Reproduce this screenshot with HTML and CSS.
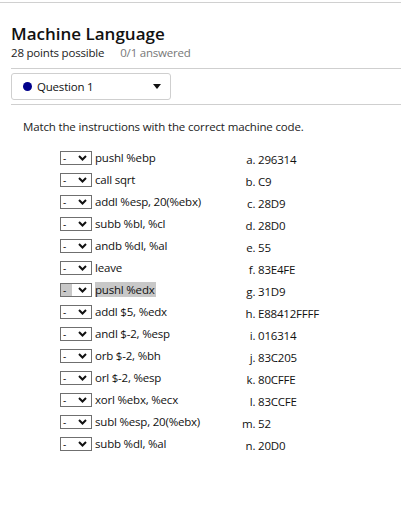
FILE: index.html
```html
<!DOCTYPE html>
<html>
<head>
<meta charset="utf-8">
<link rel="stylesheet" href="styles.css">
</head>
<body>
<div class="page">
  <header class="head">
    <h1 class="title">Machine Language</h1>
    <div class="meta"><span class="pts">28 points possible</span><span class="ans">0/1 answered</span></div>
  </header>
  <div class="qbar">
    <div class="qsel">
      <span class="dot"></span>
      <span class="qlabel">Question 1</span>
      <svg class="caret" width="8" height="5" viewBox="0 0 8 5"><path d="M0 0H8L4 5Z" fill="#111"/></svg>
    </div>
  </div>
  <main class="body">
    <p class="prompt">Match the instructions with the correct machine code.</p>
    <div class="match">
      <ul class="left">
        <li class="row"><span class="sel"><span class="dash">-</span><svg class="chev" width="9" height="6" viewBox="0 0 9 6"><path d="M1 1L4.5 4.5L8 1" fill="none" stroke="#111" stroke-width="2"/></svg></span><span class="ins">pushl %ebp</span></li>
        <li class="row"><span class="sel"><span class="dash">-</span><svg class="chev" width="9" height="6" viewBox="0 0 9 6"><path d="M1 1L4.5 4.5L8 1" fill="none" stroke="#111" stroke-width="2"/></svg></span><span class="ins">call sqrt</span></li>
        <li class="row"><span class="sel"><span class="dash">-</span><svg class="chev" width="9" height="6" viewBox="0 0 9 6"><path d="M1 1L4.5 4.5L8 1" fill="none" stroke="#111" stroke-width="2"/></svg></span><span class="ins">addl %esp, 20(%ebx)</span></li>
        <li class="row"><span class="sel"><span class="dash">-</span><svg class="chev" width="9" height="6" viewBox="0 0 9 6"><path d="M1 1L4.5 4.5L8 1" fill="none" stroke="#111" stroke-width="2"/></svg></span><span class="ins">subb %bl, %cl</span></li>
        <li class="row"><span class="sel"><span class="dash">-</span><svg class="chev" width="9" height="6" viewBox="0 0 9 6"><path d="M1 1L4.5 4.5L8 1" fill="none" stroke="#111" stroke-width="2"/></svg></span><span class="ins">andb %dl, %al</span></li>
        <li class="row"><span class="sel"><span class="dash">-</span><svg class="chev" width="9" height="6" viewBox="0 0 9 6"><path d="M1 1L4.5 4.5L8 1" fill="none" stroke="#111" stroke-width="2"/></svg></span><span class="ins">leave</span></li>
        <li class="row hl"><span class="sel"><span class="dash">-</span><svg class="chev" width="9" height="6" viewBox="0 0 9 6"><path d="M1 1L4.5 4.5L8 1" fill="none" stroke="#111" stroke-width="2"/></svg></span><span class="ins">pushl %edx</span></li>
        <li class="row"><span class="sel"><span class="dash">-</span><svg class="chev" width="9" height="6" viewBox="0 0 9 6"><path d="M1 1L4.5 4.5L8 1" fill="none" stroke="#111" stroke-width="2"/></svg></span><span class="ins">addl $5, %edx</span></li>
        <li class="row"><span class="sel"><span class="dash">-</span><svg class="chev" width="9" height="6" viewBox="0 0 9 6"><path d="M1 1L4.5 4.5L8 1" fill="none" stroke="#111" stroke-width="2"/></svg></span><span class="ins">andl $-2, %esp</span></li>
        <li class="row"><span class="sel"><span class="dash">-</span><svg class="chev" width="9" height="6" viewBox="0 0 9 6"><path d="M1 1L4.5 4.5L8 1" fill="none" stroke="#111" stroke-width="2"/></svg></span><span class="ins">orb $-2, %bh</span></li>
        <li class="row"><span class="sel"><span class="dash">-</span><svg class="chev" width="9" height="6" viewBox="0 0 9 6"><path d="M1 1L4.5 4.5L8 1" fill="none" stroke="#111" stroke-width="2"/></svg></span><span class="ins">orl $-2, %esp</span></li>
        <li class="row"><span class="sel"><span class="dash">-</span><svg class="chev" width="9" height="6" viewBox="0 0 9 6"><path d="M1 1L4.5 4.5L8 1" fill="none" stroke="#111" stroke-width="2"/></svg></span><span class="ins">xorl %ebx, %ecx</span></li>
        <li class="row"><span class="sel"><span class="dash">-</span><svg class="chev" width="9" height="6" viewBox="0 0 9 6"><path d="M1 1L4.5 4.5L8 1" fill="none" stroke="#111" stroke-width="2"/></svg></span><span class="ins">subl %esp, 20(%ebx)</span></li>
        <li class="row"><span class="sel"><span class="dash">-</span><svg class="chev" width="9" height="6" viewBox="0 0 9 6"><path d="M1 1L4.5 4.5L8 1" fill="none" stroke="#111" stroke-width="2"/></svg></span><span class="ins">subb %dl, %al</span></li>
      </ul>
      <ol class="right" type="a">
        <li>296314</li>
        <li>C9</li>
        <li>28D9</li>
        <li>28D0</li>
        <li>55</li>
        <li>83E4FE</li>
        <li>31D9</li>
        <li>E88412FFFF</li>
        <li>016314</li>
        <li>83C205</li>
        <li>80CFFE</li>
        <li>83CCFE</li>
        <li>52</li>
        <li>20D0</li>
      </ol>
    </div>
  </main>
</div>
</body>
</html>
```

FILE: styles.css
```css
html, body {
  margin: 0;
  padding: 0;
  background: #fff;
}
body {
  font-family: "Open Sans", "DejaVu Sans", sans-serif;
  color: #111;
}
.page {
  width: 401px;
  border-top: 1px solid #d0d0d0;
  margin-top: 2px;
}
.head {
  padding: 20px 0 0 11px;
}
.title {
  margin: 0;
  font-size: 17px;
  line-height: 22px;
  font-weight: 600;
  color: #111;
  letter-spacing: 0;
}
.meta {
  font-size: 11.5px;
  line-height: 16px;
  padding-bottom: 7px;
  border-bottom: 1px solid #cfcfcf;
  letter-spacing: -0.2px;
}
.pts {
  color: #222;
  margin-right: 16px;
}
.ans {
  color: #777;
}
.qbar {
  margin-left: 11px;
  padding: 4px 0 4px 0;
  border-bottom: 1px solid #cfcfcf;
}
.qsel {
  width: 158px;
  height: 25px;
  border: 1px solid #cfcfcf;
  border-radius: 3px;
  display: flex;
  align-items: center;
  box-sizing: content-box;
}
.dot {
  width: 9px;
  height: 9px;
  border-radius: 50%;
  background: #00008b;
  margin-left: 11px;
  margin-right: 5px;
}
.qlabel {
  font-size: 11.5px;
  color: #111;
  flex: 1;
  letter-spacing: -0.2px;
}
.caret {
  margin-right: 9px;
}
.body {
  padding: 14px 0 0 23px;
}
.prompt {
  margin: 0;
  font-size: 11.5px;
  line-height: 16px;
  color: #222;
  letter-spacing: -0.15px;
}
.match {
  display: flex;
  margin-top: 15px;
  margin-left: 37px;
}
.left {
  list-style: none;
  margin: 0;
  padding: 0;
  width: 190px;
}
.row {
  height: 22px;
  display: flex;
  align-items: flex-start;
  font-size: 11.5px;
  letter-spacing: -0.2px;
}
.sel {
  width: 30px;
  height: 12px;
  border: 1px solid #6f6f6f;
  display: flex;
  align-items: center;
  background: #fff;
  margin-right: 3px;
  margin-top: 1px;
}
.dash {
  width: 9px;
  padding-left: 2px;
  font-size: 10px;
  line-height: 12px;
  color: #111;
}
.chev {
  margin-left: 6px;
}
.ins {
  line-height: 15px;
  color: #111;
  padding-right: 1px;
}
.hl .ins {
  background: #c8c8c8;
}
.hl .dash {
  background: #c8c8c8;
}
.right {
  margin: 2px 0 0 0;
  padding: 0 0 0 8px;
  list-style: lower-alpha;
  font-size: 11.5px;
  letter-spacing: -0.2px;
}
.right li {
  height: 22px;
  line-height: 15px;
  color: #111;
}
```
